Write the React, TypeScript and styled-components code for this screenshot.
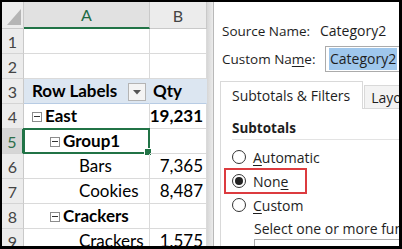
import React from 'react';
import styled, { createGlobalStyle, css } from 'styled-components';

const Global = createGlobalStyle`
  html, body { margin: 0; padding: 0; background: #000; }
  body { width: 402px; height: 249px; overflow: hidden; }
`;

const Frame = styled.div`
  box-sizing: border-box;
  width: 402px;
  height: 249px;
  padding: 2px 3px 3px 2px;
  background: #000;
  display: flex;
  overflow: hidden;
`;

/* ---------- spreadsheet ---------- */

const Sheet = styled.div`
  width: 205px;
  flex: none;
  background: #fff;
  overflow: hidden;
  font-family: Lato, 'Liberation Sans', sans-serif;
  font-size: 17px;
  color: #000;
`;

const SheetRow = styled.div<{ $h: number }>`
  display: grid;
  grid-template-columns: 22px 126px 57px;
  height: ${(p) => p.$h}px;
`;

const Corner = styled.div`
  box-sizing: border-box;
  background: #ececec;
  border-right: 1px solid #c9c9c9;
  border-bottom: 1px solid #c9c9c9;
  display: flex;
  align-items: flex-end;
  justify-content: flex-end;
  padding: 0 2px 3px 0;
`;

const ColHead = styled.div<{ $active?: boolean }>`
  box-sizing: border-box;
  display: flex;
  align-items: center;
  justify-content: center;
  font-size: 16px;
  background: ${(p) => (p.$active ? '#e1e1e1' : '#ececec')};
  color: ${(p) => (p.$active ? '#1f6b43' : '#444')};
  border-right: 1px solid #c9c9c9;
  border-bottom: ${(p) => (p.$active ? '2px solid #217346' : '1px solid #c9c9c9')};
`;

const RowHead = styled.div<{ $active?: boolean }>`
  box-sizing: border-box;
  display: flex;
  align-items: flex-end;
  justify-content: center;
  padding-bottom: 2px;
  font-size: 16px;
  background: ${(p) => (p.$active ? '#d6d6d6' : '#ececec')};
  color: ${(p) => (p.$active ? '#2d6e49' : '#444')};
  border-right: ${(p) => (p.$active ? '2px solid #217346' : '1px solid #c9c9c9')};
  border-bottom: 1px solid #d4d4d4;
`;

const Cell = styled.div<{
  $bold?: boolean;
  $right?: boolean;
  $indent?: number;
  $header?: boolean;
}>`
  box-sizing: border-box;
  position: relative;
  display: flex;
  align-items: flex-end;
  padding-bottom: 2px;
  padding-left: ${(p) => p.$indent ?? 3}px;
  padding-right: 3px;
  justify-content: ${(p) => (p.$right ? 'flex-end' : 'flex-start')};
  font-weight: ${(p) => (p.$bold ? 700 : 400)};
  white-space: nowrap;
  border-right: 1px solid #dadada;
  border-bottom: 1px solid #dadada;
  ${(p) =>
    p.$header &&
    css`
      background: #dce6f1;
      border-right-color: #dce6f1;
      border-bottom-color: #b8cce4;
    `}
`;

const Toggle = styled.span`
  box-sizing: border-box;
  width: 10px;
  height: 10px;
  border: 1px solid #8c8c8c;
  background: #fff;
  margin-right: 3px;
  margin-bottom: 4px;
  position: relative;
  flex: none;
  &::after {
    content: '';
    position: absolute;
    left: 1px;
    right: 1px;
    top: 3px;
    height: 1px;
    background: #333;
  }
`;

const FilterButton = styled.span`
  box-sizing: border-box;
  position: absolute;
  right: 3px;
  top: 4px;
  width: 18px;
  height: 18px;
  background: #f4f4f4;
  border: 1px solid #b4b4b4;
  display: flex;
  align-items: center;
  justify-content: center;
`;

const Selection = styled.div`
  position: absolute;
  left: -1px;
  top: -1px;
  right: -1px;
  bottom: -1px;
  border: 2px solid #217346;
  pointer-events: none;
`;

const FillHandle = styled.div`
  position: absolute;
  right: -4px;
  bottom: -4px;
  width: 6px;
  height: 6px;
  background: #217346;
  border: 1px solid #fff;
`;

/* ---------- dialog ---------- */

const Shadow = styled.div`
  width: 6px;
  flex: none;
  background: linear-gradient(to right, #d6d6d6, #ececec);
`;

const Dialog = styled.div`
  flex: 1;
  min-width: 0;
  overflow: hidden;
  background: #fff;
  border-left: 1px solid #b9b9b9;
  padding-top: 19px;
  font-family: 'Open Sans', 'Noto Sans', sans-serif;
  font-size: 14px;
  color: #1e1e1e;
  display: flex;
  flex-direction: column;
`;

const FieldRow = styled.div`
  display: flex;
  align-items: center;
  height: 24px;
  margin-left: 8px;
  white-space: nowrap;
  & + & {
    margin-top: 7px;
  }
`;

const FieldLabel = styled.span`
  flex: none;
  width: 98px;
  font-size: 13.5px;
`;

const FieldValue = styled.span`
  flex: none;
`;

const Input = styled.div`
  box-sizing: border-box;
  flex: 1;
  margin-left: 5px;
  height: 26px;
  border: 1px solid #ababab;
  border-right: none;
  display: flex;
  align-items: center;
  padding-left: 3px;
`;

const Highlight = styled.span`
  background: #9fc7ec;
  padding: 1px 1px 2px;
`;

const Key = styled.span`
  text-decoration: underline;
  text-underline-offset: 2px;
`;

const TabArea = styled.div`
  margin: 10px 0 0 6px;
  display: flex;
  flex-direction: column;
`;

const TabStrip = styled.div`
  display: flex;
  align-items: flex-end;
  height: 27px;
`;

const Tab = styled.div<{ $active?: boolean }>`
  box-sizing: border-box;
  white-space: nowrap;
  display: flex;
  align-items: center;
  border: 1px solid #d9d9d9;
  ${(p) =>
    p.$active
      ? css`
          height: 28px;
          padding: 0 12px 0 11px;
          background: #fff;
          border-bottom: none;
          position: relative;
          z-index: 1;
          margin-bottom: -1px;
        `
      : css`
          height: 23px;
          padding: 0 8px 0 6px;
          background: #f3f3f3;
          margin-left: 1px;
          border-bottom: none;
        `}
`;

const Panel = styled.div`
  border-top: 1px solid #d9d9d9;
  border-left: 1px solid #d9d9d9;
  padding: 9px 0 0 11px;
  display: flex;
  flex-direction: column;
`;

const Heading = styled.div`
  font-weight: 700;
  font-size: 13.5px;
  line-height: 20px;
  height: 20px;
  border-bottom: 1px solid #e3e3e3;
  padding-bottom: 1px;
  margin-bottom: 5px;
`;

const RadioRow = styled.div`
  position: relative;
  display: flex;
  align-items: center;
  height: 24px;
  white-space: nowrap;
`;

const RadioCircle = styled.span<{ $checked?: boolean }>`
  box-sizing: border-box;
  width: 14px;
  height: 14px;
  border-radius: 50%;
  border: 1px solid #333;
  background: #fff;
  margin-right: 7px;
  display: flex;
  align-items: center;
  justify-content: center;
  flex: none;
  &::after {
    content: '';
    width: 8px;
    height: 8px;
    border-radius: 50%;
    background: ${(p) => (p.$checked ? '#222' : 'transparent')};
  }
`;

const Callout = styled.div`
  position: absolute;
  left: -8px;
  top: -1px;
  width: 83px;
  height: 26px;
  box-sizing: border-box;
  border: 2px solid #dc3b3f;
  pointer-events: none;
`;

const Hint = styled.div`
  margin-left: 22px;
  height: 22px;
  display: flex;
  align-items: center;
  white-space: nowrap;
`;

const ListBox = styled.div`
  margin-left: 22px;
  height: 30px;
  border: 1px solid #ababab;
  border-right: none;
`;

const CornerTriangle = () => (
  <svg width="14" height="16" viewBox="0 0 14 16">
    <polygon points="14,0 14,16 0,16" fill="#b5b5b5" />
  </svg>
);

const DownCaret = () => (
  <svg width="8" height="5" viewBox="0 0 8 5">
    <polygon points="0,0 8,0 4,4.5" fill="#555" />
  </svg>
);

type R = {
  n: number;
  a?: React.ReactNode;
  b?: string;
  bold?: boolean;
  indent?: number;
  toggle?: boolean;
};

const rows: R[] = [
  { n: 1 },
  { n: 2 },
  { n: 3 },
  { n: 4, a: 'East', b: '19,231', bold: true, indent: 8, toggle: true },
  { n: 5, a: 'Group1', bold: true, indent: 26, toggle: true },
  { n: 6, a: 'Bars', b: '7,365', indent: 55 },
  { n: 7, a: 'Cookies', b: '8,487', indent: 55 },
  { n: 8, a: 'Crackers', bold: true, indent: 26, toggle: true },
  { n: 9, a: 'Crackers', b: '1,575', indent: 55 },
];

export default function App() {
  return (
    <>
      <Global />
      <Frame>
        <Sheet>
          <SheetRow $h={27}>
            <Corner>
              <CornerTriangle />
            </Corner>
            <ColHead $active>A</ColHead>
            <ColHead>B</ColHead>
          </SheetRow>
          {rows.map((r) =>
            r.n === 3 ? (
              <SheetRow $h={25} key={r.n}>
                <RowHead>3</RowHead>
                <Cell $header $bold $indent={8}>
                  Row Labels
                  <FilterButton>
                    <DownCaret />
                  </FilterButton>
                </Cell>
                <Cell $header $bold>
                  Qty
                </Cell>
              </SheetRow>
            ) : (
              <SheetRow $h={25} key={r.n}>
                <RowHead $active={r.n === 5}>{r.n}</RowHead>
                <Cell $bold={r.bold} $indent={r.indent}>
                  {r.toggle && <Toggle />}
                  {r.a}
                  {r.n === 5 && (
                    <Selection>
                      <FillHandle />
                    </Selection>
                  )}
                </Cell>
                <Cell $right $bold={r.bold}>
                  {r.b}
                </Cell>
              </SheetRow>
            )
          )}
        </Sheet>
        <Shadow />
        <Dialog>
          <FieldRow>
            <FieldLabel>Source Name:</FieldLabel>
            <FieldValue>Category2</FieldValue>
          </FieldRow>
          <FieldRow>
            <FieldLabel>
              Custom Na<Key>m</Key>e:
            </FieldLabel>
            <Input>
              <Highlight>Category2</Highlight>
            </Input>
          </FieldRow>
          <TabArea>
            <TabStrip>
              <Tab $active>Subtotals &amp; Filters</Tab>
              <Tab>Layout &amp; Print</Tab>
            </TabStrip>
            <Panel>
              <Heading>Subtotals</Heading>
              <RadioRow>
                <RadioCircle />
                <span>
                  <Key>A</Key>utomatic
                </span>
              </RadioRow>
              <RadioRow>
                <RadioCircle $checked />
                <span>
                  Non<Key>e</Key>
                </span>
                <Callout />
              </RadioRow>
              <RadioRow>
                <RadioCircle />
                <span>
                  <Key>C</Key>ustom
                </span>
              </RadioRow>
              <Hint>Select one or more functions:</Hint>
              <ListBox />
            </Panel>
          </TabArea>
        </Dialog>
      </Frame>
    </>
  );
}
